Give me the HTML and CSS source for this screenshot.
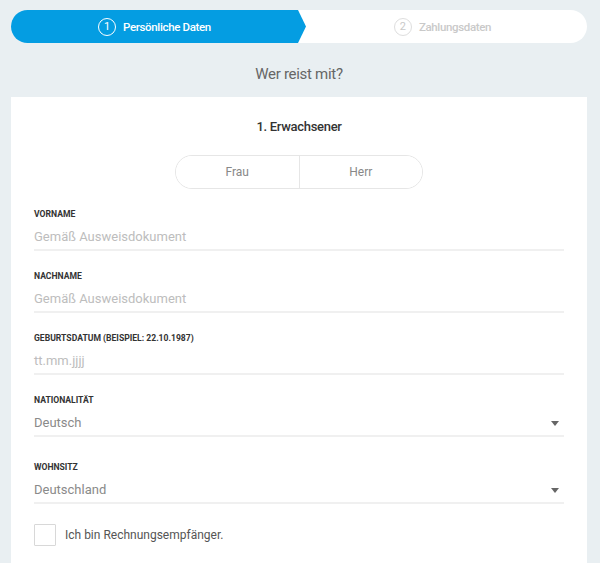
FILE: index.html
```html
<!DOCTYPE html>
<html lang="de">
<head>
<meta charset="utf-8">
<link rel="stylesheet" href="styles.css">
</head>
<body>
<div class="page">
  <div class="stepper">
    <div class="step step-active">
      <span class="step-num">1</span>
      <span class="step-label">Persönliche Daten</span>
    </div>
    <div class="step step-next">
      <span class="step-num">2</span>
      <span class="step-label">Zahlungsdaten</span>
    </div>
  </div>

  <h1 class="page-title">Wer reist mit?</h1>

  <div class="card">
    <h2 class="card-title">1. Erwachsener</h2>

    <div class="toggle">
      <button class="toggle-btn">Frau</button>
      <button class="toggle-btn">Herr</button>
    </div>

    <div class="field">
      <label class="field-label">Vorname</label>
      <div class="field-input placeholder">Gemäß Ausweisdokument</div>
    </div>
    <div class="field">
      <label class="field-label">Nachname</label>
      <div class="field-input placeholder">Gemäß Ausweisdokument</div>
    </div>
    <div class="field">
      <label class="field-label">Geburtsdatum (Beispiel: 22.10.1987)</label>
      <div class="field-input placeholder">tt.mm.jjjj</div>
    </div>
    <div class="field field-select">
      <label class="field-label">Nationalität</label>
      <div class="field-input value">Deutsch<span class="caret"></span></div>
    </div>
    <div class="field field-select">
      <label class="field-label">Wohnsitz</label>
      <div class="field-input value">Deutschland<span class="caret"></span></div>
    </div>

    <div class="checkbox-row">
      <span class="checkbox"></span>
      <span class="checkbox-label">Ich bin Rechnungsempfänger.</span>
    </div>
  </div>
</div>
</body>
</html>
```

FILE: styles.css
```css
* { box-sizing: border-box; }
html, body {
  margin: 0;
  padding: 0;
  background: #e9eff2;
  font-family: Roboto, "Liberation Sans", Arial, sans-serif;
  height: 563px;
  overflow: hidden;
}
.page {
  width: 576px;
  margin-left: 11px;
  padding-top: 10px;
}
.stepper {
  display: flex;
  height: 33px;
  background: #fff;
  border-radius: 17px;
  overflow: hidden;
}
.step {
  display: flex;
  align-items: center;
  justify-content: center;
  gap: 7px;
  font-size: 11.5px;
  font-weight: 500;
  letter-spacing: -0.35px;
}
.step-active {
  width: 295px;
  background: #049de2;
  color: #fff;
  clip-path: polygon(0 0, calc(100% - 8px) 0, 100% 50%, calc(100% - 8px) 100%, 0 100%);
  padding-right: 8px;
}
.step-next {
  flex: 1;
  color: #c9c9c9;
  margin-left: -8px;
}
.step-num {
  width: 18px;
  height: 18px;
  border-radius: 50%;
  border: 1.5px solid currentColor;
  display: flex;
  align-items: center;
  justify-content: center;
  font-size: 11px;
  font-weight: 400;
  letter-spacing: 0;
}
.step-next .step-num { border-color: #dedede; }

.page-title {
  margin: 21px 0 13px;
  text-align: center;
  font-size: 15px;
  line-height: 20px;
  font-weight: 400;
  color: #666;
  letter-spacing: -0.3px;
}
.card {
  background: #fff;
  padding: 20px 23px 20px;
  height: 466px;
}
.card-title {
  margin: 0;
  text-align: center;
  font-size: 13px;
  line-height: 20px;
  font-weight: 500;
  color: #333;
  letter-spacing: -0.3px;
}
.toggle {
  display: flex;
  width: 248px;
  height: 34px;
  margin: 18px auto 19px;
  border: 1px solid #e6e6e6;
  border-radius: 17px;
  overflow: hidden;
}
.toggle-btn {
  flex: 1;
  border: 0;
  background: #fff;
  font-family: inherit;
  font-size: 12px;
  color: #888;
  padding: 0;
}
.toggle-btn + .toggle-btn { border-left: 1px solid #e6e6e6; }

.field { margin-bottom: 19px; }
.field-select + .field-select { margin-top: 24px; }
.field-label {
  display: block;
  height: 12px;
  line-height: 12px;
  font-size: 8.6px;
  font-weight: 700;
  text-transform: uppercase;
  color: #333;
}
.field-input {
  position: relative;
  height: 31px;
  padding-top: 8px;
  line-height: 18px;
  font-size: 13px;
  border-bottom: 2px solid #f0f0f0;
}
.placeholder { color: #bdbdbd; }
.value { color: #8a8a8a; }
.caret {
  position: absolute;
  right: 5px;
  top: 15px;
  width: 0;
  height: 0;
  border-left: 4px solid transparent;
  border-right: 4px solid transparent;
  border-top: 5px solid #666;
}
.checkbox-row {
  display: flex;
  align-items: center;
  gap: 9px;
  margin-top: 20px;
}
.checkbox {
  width: 22px;
  height: 22px;
  border: 1px solid #d8d8d8;
  border-radius: 1px;
}
.checkbox-label {
  font-size: 12px;
  color: #555;
}
```
